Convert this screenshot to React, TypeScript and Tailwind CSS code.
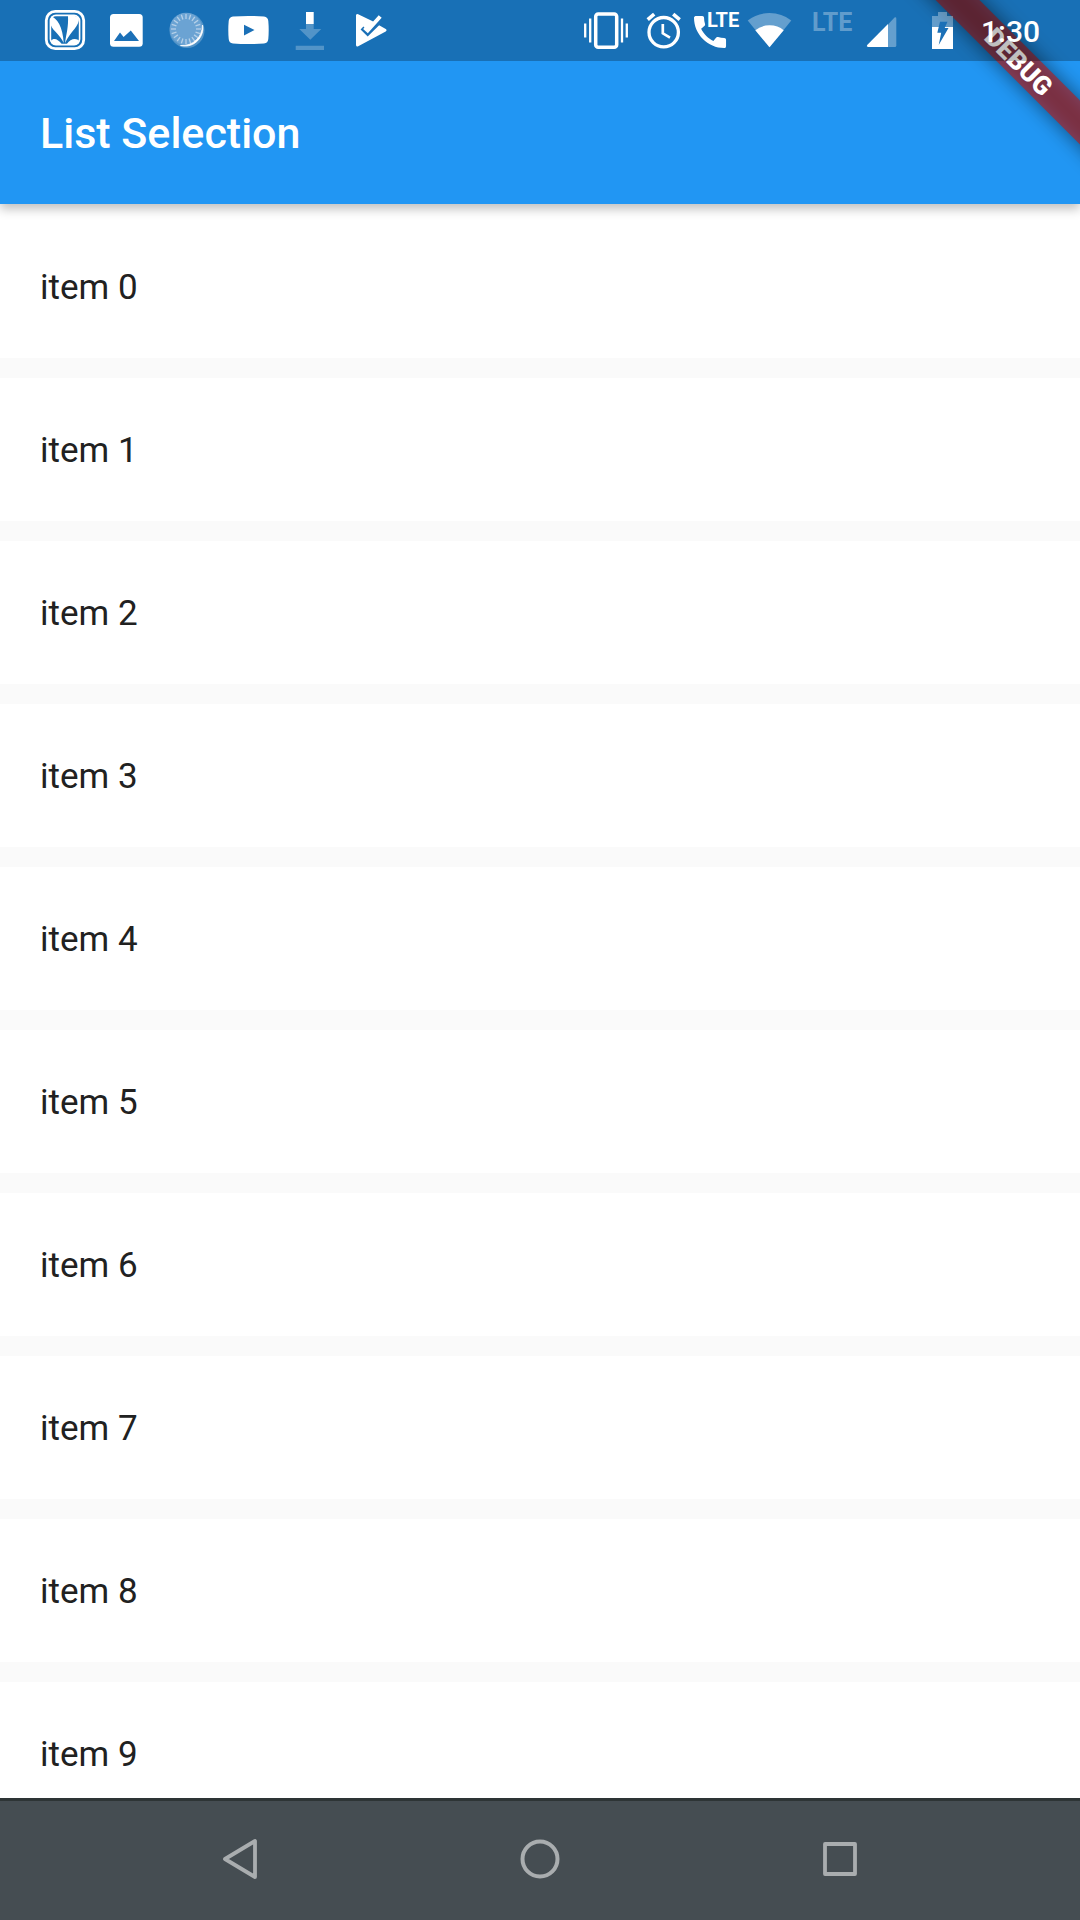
import React from "react";

const items = Array.from({ length: 10 }, (_, i) => `item ${i}`);
const BAR = "#1b70b7";

function SaavnIcon() {
  return (
    <svg width="61" height="61" viewBox="0 0 61 61" fill="none" aria-hidden="true">
      <rect x="11.3" y="11.3" width="37.4" height="37.4" rx="9" stroke="#fff" strokeWidth="2.8" />
      <rect x="15.4" y="15.4" width="29.2" height="29.2" rx="5.5" stroke="#fff" strokeWidth="1.6" />
      <path d="M16 16.5c6 1 12 11 12.7 26.500C25.500 35 18 31 16 25.500z" fill="#fff" />
      <path d="M33 16c5-.6 9 0 11 1.500.6 9-8 13-14 25.500C31.500 33 33.500 27 33 16z" fill="#fff" />
      <path d="M16 41c2.500-3.500 7-2 11 3.500H19c-2 0-3-1.500-3-3.500zM31.500 44.500c4-6 9.500-7 13-3.500 0 2-1.500 3.500-3.500 3.500z" fill="#fff" />
    </svg>
  );
}

function ImageIcon() {
  return (
    <svg width="61" height="61" viewBox="0 0 61 61" aria-hidden="true">
      <rect x="14" y="14" width="32.7" height="32.7" rx="3.5" fill="#fff" />
      <path d="M18 41l6-8.500 3.600 4.500 7.200-6.500L43 41z" fill={BAR} />
    </svg>
  );
}

function BurstIcon() {
  const ticks = Array.from({ length: 20 }, (_, i) => i * 18);
  return (
    <svg width="61" height="61" viewBox="0 0 61 61" aria-hidden="true">
      <circle cx="30" cy="30.5" r="17.5" fill="#fff" opacity="0.25" />
      <circle cx="29" cy="29" r="16.3" fill="#6ba3d3" />
      {ticks.map((a) => (
        <path key={a} d="M29 14v5" stroke="#b5d0e8" strokeWidth="1.3" transform={`rotate(${a} 29 29)`} />
      ))}
      <path d="M45.500 25c2.500 11-8 24-22 20.500 12 1 22-8 22-20.500z" fill="#fff" stroke="#fff" strokeWidth="0.8" />
    </svg>
  );
}

function YoutubeIcon() {
  return (
    <svg width="61" height="61" viewBox="0 0 61 61" aria-hidden="true">
      <path d="M15 16.500q15.500-1 31 0 4 .5 4.300 4.500.8 9 0 18-.3 4-4.300 4.500-15.500 1-31 0-4-.5-4.300-4.500-.8-9 0-18 .3-4 4.300-4.500z" fill="#fff" />
      <path d="M26 24.800v10.600l10.500-5.300z" fill={BAR} />
    </svg>
  );
}

function DownloadIcon() {
  return (
    <svg width="61" height="61" viewBox="0 0 61 61" fill="#fff" aria-hidden="true">
      <path d="M27 12h7.700v12H27z" />
      <path d="M27 24h7.700v5h7.600L31.300 39.800 20.300 29H27zM16.700 45.700H45V50H16.700z" opacity="0.25" />
    </svg>
  );
}

function PlayCheckIcon() {
  return (
    <svg width="61" height="61" viewBox="0 0 61 61" fill="none" aria-hidden="true">
      <path d="M17.500 15.500v29.500L45 30.300 37.500 26 28 31 32 22.500z" fill="#fff" stroke="#fff" strokeWidth="3" strokeLinejoin="round" />
      <path d="M22 28l5.700 5.700L41 20.500" stroke={BAR} strokeWidth="4" />
      <path d="M24.500 27.500l3.200 3L40.200 16.500" stroke="#fff" strokeWidth="4" />
    </svg>
  );
}

function VibrateIcon() {
  return (
    <svg width="52" height="61" viewBox="0 0 52 61" fill="none" stroke="#fff" aria-hidden="true">
      <rect x="15.7" y="14" width="21" height="33.3" rx="2.5" strokeWidth="3.5" />
      <path d="M10.200 18.500v24M42 18.500v24M5.200 23.500v14M46.800 23.500v14" strokeWidth="2.3" />
    </svg>
  );
}

function AlarmIcon() {
  return (
    <svg width="40" height="61" viewBox="0 0 40 61" fill="none" stroke="#fff" aria-hidden="true">
      <circle cx="19.7" cy="32.2" r="14.7" strokeWidth="3.3" />
      <path d="M18.800 24v9.300l7.200 4.300" strokeWidth="2.7" />
      <path d="M3.700 19.700l6.500-5.500M35.700 19.700l-6.500-5.500" strokeWidth="3.6" />
    </svg>
  );
}

function LteCallIcon() {
  return (
    <svg width="52" height="61" viewBox="0 0 52 61" fill="#fff" aria-hidden="true">
      <path
        transform="translate(-1.33 10.67) scale(1.78)"
        d="M20.010 15.380c-1.230 0-2.420-.2-3.530-.56-.35-.12-.74-.03-1.010.24l-1.570 1.970c-2.830-1.350-5.480-3.900-6.890-6.830l1.950-1.660c.27-.28.35-.67.24-1.020-.37-1.110-.56-2.300-.56-3.530 0-.54-.45-.99-.99-.99H4.190C3.650 3 3 3.240 3 3.990 3 13.280 10.730 21 20.010 21c.71 0 .99-.63.99-1.180v-3.450c0-.54-.45-.99-.99-.99z"
      />
      <text x="17" y="27" fontFamily="Roboto" fontSize="20" fontWeight="700">LTE</text>
    </svg>
  );
}

function WifiIcon() {
  return (
    <svg width="48" height="61" viewBox="0 0 48 61" fill="#fff" aria-hidden="true">
      <path d="M23.500 47.300L1.700 20.500Q11 13 23.500 13T45.300 20.500z" opacity="0.33" />
      <path d="M23.500 47.300L9.300 30.200Q15 25.300 23.500 25.300T37.700 30.200z" />
    </svg>
  );
}

function SignalIcon() {
  return (
    <svg width="36" height="61" viewBox="0 0 36 61" fill="#fff" aria-hidden="true">
      <path d="M24 24.500l6.500-7q1.800-1 1.800 1V45.500q0 1.500-1.500 1.500H24z" opacity="0.33" />
      <path d="M24 24v23H4q-2-.5-.8-2z" />
    </svg>
  );
}

function BatteryIcon() {
  return (
    <svg width="25" height="61" viewBox="0 0 25 61" aria-hidden="true">
      <path d="M8 12h9v4h6v11H2V16h6z" fill="#fff" opacity="0.33" />
      <path d="M2 27h21v22H2z" fill="#fff" />
      <path d="M10 21.700h7.500L14.700 28h3.800L8.700 45l2.500-12.300H7.300z" fill={BAR} />
    </svg>
  );
}

function DebugRibbon() {
  return (
    <div className="pointer-events-none absolute top-0 right-0 h-full w-[204px] overflow-hidden">
      <div className="absolute top-[46px] right-[-89px] h-[31px] w-[300px] rotate-45">
        <div className="absolute inset-0 bg-black/50 blur-[10px]" />
        <div className="relative flex h-full items-center justify-center bg-[#b71c1c]/63 text-[26px] leading-none font-black text-white">
          DEBUG
        </div>
      </div>
    </div>
  );
}

function StatusBar() {
  return (
    <div className="relative flex h-[61px] items-center justify-between bg-black/25 pr-10 pl-[35px]">
      <div className="flex">
        <SaavnIcon />
        <ImageIcon />
        <BurstIcon />
        <YoutubeIcon />
        <DownloadIcon />
        <PlayCheckIcon />
      </div>
      <div className="flex items-center">
        <VibrateIcon />
        <div className="ml-3"><AlarmIcon /></div>
        <div className="ml-1.5"><LteCallIcon /></div>
        <div className="ml-1"><WifiIcon /></div>
        <span className="ml-[18px] w-11 pb-4 text-[25px] leading-7 font-bold text-white/33">LTE</span>
        <div className="ml-2"><SignalIcon /></div>
        <div className="ml-[30px]"><BatteryIcon /></div>
        <time className="ml-[26px] pt-0.5 text-[30px] leading-9 font-medium text-white">1:30</time>
      </div>
    </div>
  );
}

function NavBar() {
  return (
    <nav className="grid h-[122px] shrink-0 grid-cols-3 border-t-[3px] border-[#2d3435] bg-[#454d52] px-[90px] pb-1 text-[#a9adaf]">
      <button type="button" aria-label="Back" className="flex items-center justify-center">
        <svg width="44" height="44" viewBox="0 0 44 44" fill="none" stroke="currentColor" strokeWidth="3.8" strokeLinejoin="round">
          <path d="M37 4v36L7 22z" />
        </svg>
      </button>
      <button type="button" aria-label="Home" className="flex items-center justify-center">
        <svg width="44" height="44" viewBox="0 0 44 44" fill="none" stroke="currentColor" strokeWidth="4">
          <circle cx="22" cy="22" r="17.5" />
        </svg>
      </button>
      <button type="button" aria-label="Recent apps" className="flex items-center justify-center">
        <svg width="44" height="44" viewBox="0 0 44 44" fill="none" stroke="currentColor" strokeWidth="3.8" strokeLinejoin="round">
          <rect x="7" y="7" width="30" height="30" />
        </svg>
      </button>
    </nav>
  );
}

export default function App() {
  return (
    <div className="flex h-screen flex-col overflow-hidden bg-[#fafafa] font-[Roboto,sans-serif]">
      <header className="relative z-10 shrink-0 bg-[#2196f3] shadow-[0_5px_10px_rgba(0,0,0,0.25)]">
        <DebugRibbon />
        <StatusBar />
        <div className="flex h-[143px] items-center px-10 pt-0.5">
          <h1 className="text-[43px] leading-none font-medium text-white">List Selection</h1>
        </div>
      </header>
      <main className="min-h-0 flex-1 overflow-y-auto [scrollbar-width:none]">
        <ul className="flex flex-col gap-5 pb-5">
          {items.map((label) => (
            <li key={label} className="bg-white first:pt-[11px]">
              <button type="button" className="flex h-[143px] w-full items-center px-10 pt-0.5 text-left text-[35px] leading-none text-[#212121]">
                {label}
              </button>
            </li>
          ))}
        </ul>
      </main>
      <NavBar />
    </div>
  );
}
